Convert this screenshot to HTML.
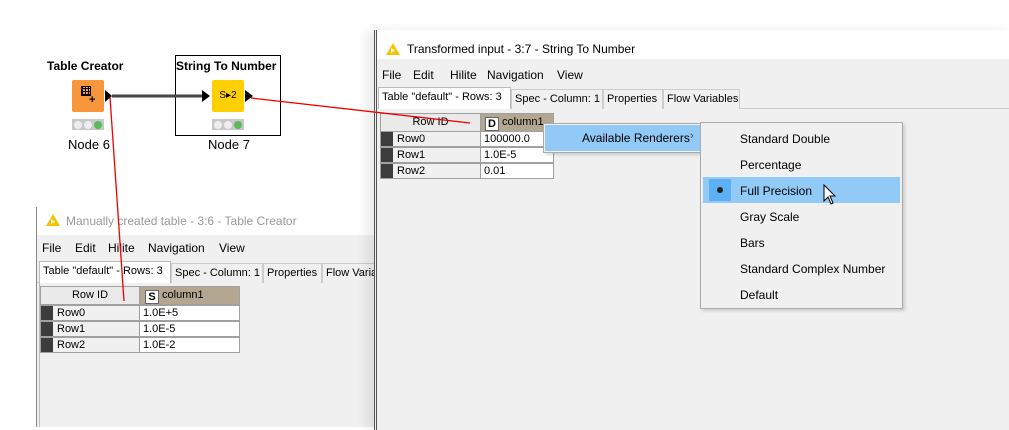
<!DOCTYPE html>
<html><head><meta charset="utf-8"><style>
*{margin:0;padding:0;box-sizing:border-box}
body{width:1009px;height:427px;overflow:hidden;background:#fff;position:relative;font-family:"Liberation Sans",sans-serif;font-size:12px;color:#000}
.a{position:absolute;white-space:nowrap}
.win{position:absolute;background:#f0f0f0;border-left:1px solid #888;}
.title{position:absolute;left:0;right:0;top:0;height:28px;background:#fff}
.menu{position:absolute;font-size:12px}
.tab{position:absolute;height:20px;border:1px solid #ccc;border-bottom:none;background:#f0f0f0;font-size:11px;padding:3px 3px 0;white-space:nowrap}
.tab.sel{background:#fff;height:22px;border-color:#bbb}
.cell{position:absolute;height:16px;border:1px solid #a0a0a0;background:#fff;font-size:11px;padding-left:3px;line-height:14px}
.rh{position:absolute;height:16px;border:1px solid #a0a0a0;background:#f0f0f0;font-size:11px;line-height:14px;padding-left:16px}
.rh:before{content:"";position:absolute;left:0;top:0;width:12px;height:14px;background:#3c3c3c}
.hd{position:absolute;height:19px;border:1px solid #a0a0a0;font-size:11px;line-height:17px}
.tri{position:absolute;width:0;height:0;border-left:14px solid transparent;border-right:0}
</style></head><body>

<!-- canvas nodes -->
<div class="a" style="left:47px;top:59px;font-weight:bold;font-size:12px">Table Creator</div>
<div class="a" style="left:72px;top:80px;width:32px;height:32px;background:#f7963a;border-radius:2px"></div>
<div class="a" style="left:81px;top:86px;width:10px;height:10px;border:1px solid #000;background:repeating-linear-gradient(90deg,#000 0 1px,transparent 1px 3px),repeating-linear-gradient(0deg,#000 0 1px,transparent 1px 3px)"></div>
<div class="a" style="left:89px;top:94px;font-weight:bold;font-size:11px">+</div>
<div class="a" style="left:72px;top:119px;width:32px;height:11px;background:#c8c8c8"></div>
<div class="a" style="left:74px;top:121px;width:8px;height:8px;border-radius:50%;background:#eee"></div>
<div class="a" style="left:84px;top:121px;width:8px;height:8px;border-radius:50%;background:#eee"></div>
<div class="a" style="left:94px;top:121px;width:8px;height:8px;border-radius:50%;background:#5cb85c"></div>
<div class="a" style="left:68px;top:137px;font-size:13px">Node 6</div>

<div class="a" style="left:175px;top:55px;width:106px;height:81px;border:1px solid #000"></div>
<div class="a" style="left:176px;top:59px;font-weight:bold;font-size:12px">String To Number</div>
<div class="a" style="left:212px;top:80px;width:32px;height:32px;background:#ffd000;border-radius:2px;font-size:10px;text-align:center;line-height:32px">S▸2</div>
<div class="a" style="left:212px;top:119px;width:32px;height:11px;background:#c8c8c8"></div>
<div class="a" style="left:214px;top:121px;width:8px;height:8px;border-radius:50%;background:#eee"></div>
<div class="a" style="left:224px;top:121px;width:8px;height:8px;border-radius:50%;background:#eee"></div>
<div class="a" style="left:234px;top:121px;width:8px;height:8px;border-radius:50%;background:#5cb85c"></div>
<div class="a" style="left:208px;top:137px;font-size:13px">Node 7</div>

<svg class="a" style="left:0;top:0" width="1009" height="427">
<line x1="112" y1="96" x2="202" y2="96" stroke="#444" stroke-width="3"/>
<polygon points="105,90 105,102 112,96" fill="#000"/>
<polygon points="202,90 202,102 210,96" fill="#000"/>
<polygon points="245,90 245,102 253,96" fill="#000"/>
</svg>

<!-- back window -->
<div class="win" style="left:36px;top:207px;width:345px;height:220px">
 <div class="title"></div>
 <svg class="a" style="left:8px;top:6px" width="16" height="14"><polygon points="8,1 15,13 1,13" fill="#f5c400"/><polygon points="6,6 6,11 10,8.5" fill="#fff"/></svg>
 <div class="a" style="left:29px;top:7px;font-size:12px;color:#999">Manually created table - 3:6 - Table Creator</div>
 <div class="menu a" style="left:5px;top:34px">File</div>
 <div class="menu a" style="left:38px;top:34px">Edit</div>
 <div class="menu a" style="left:71px;top:34px">Hilite</div>
 <div class="menu a" style="left:111px;top:34px">Navigation</div>
 <div class="menu a" style="left:182px;top:34px">View</div>
 <div class="a" style="left:0;right:0;top:75px;border-top:1px solid #ccc"></div>
 <div class="tab sel" style="left:2px;top:54px;width:132px">Table "default" - Rows: 3</div>
 <div class="tab" style="left:134px;top:56px;width:92px">Spec - Column: 1</div>
 <div class="tab" style="left:226px;top:56px;width:59px">Properties</div>
 <div class="tab" style="left:285px;top:56px;width:70px">Flow Variables</div>
 <div class="a" style="left:2px;top:76px;right:0;bottom:0;border-left:1px solid #bbb"></div>
 <div class="hd" style="left:3px;top:79px;width:100px;background:#eaeaea;text-align:center">Row ID</div>
 <div class="hd" style="left:102px;top:79px;width:101px;background:#b4a792;padding-left:5px"><span style="display:inline-block;width:14px;height:14px;background:#fff;border:1px solid #666;text-align:center;line-height:12px;font-weight:bold;vertical-align:-2px">S</span> column1</div>
 <div class="rh" style="left:3px;top:98px;width:100px">Row0</div><div class="cell" style="left:102px;top:98px;width:101px">1.0E+5</div>
 <div class="rh" style="left:3px;top:114px;width:100px">Row1</div><div class="cell" style="left:102px;top:114px;width:101px">1.0E-5</div>
 <div class="rh" style="left:3px;top:130px;width:100px">Row2</div><div class="cell" style="left:102px;top:130px;width:101px">1.0E-2</div>
</div>

<!-- front window -->
<div class="win" style="left:374px;top:30px;width:640px;height:400px;border-left:3px double #555;box-shadow:-8px 0 10px rgba(0,0,0,0.08)">
 <div class="title" style="height:29px"></div>
 <svg class="a" style="left:8px;top:12px" width="16" height="14"><polygon points="8,1 15,13 1,13" fill="#f5c400"/><polygon points="6,6 6,11 10,8.5" fill="#fff"/></svg>
 <div class="a" style="left:30px;top:12px;font-size:12px">Transformed input - 3:7 - String To Number</div>
 <div class="menu a" style="left:5px;top:38px">File</div>
 <div class="menu a" style="left:36px;top:38px">Edit</div>
 <div class="menu a" style="left:73px;top:38px">Hilite</div>
 <div class="menu a" style="left:110px;top:38px">Navigation</div>
 <div class="menu a" style="left:180px;top:38px">View</div>
 <div class="a" style="left:0;right:0;top:78px;border-top:1px solid #ccc"></div>
 <div class="tab sel" style="left:1px;top:57px;width:133px">Table "default" - Rows: 3</div>
 <div class="tab" style="left:134px;top:59px;width:92px">Spec - Column: 1</div>
 <div class="tab" style="left:226px;top:59px;width:60px">Properties</div>
 <div class="tab" style="left:286px;top:59px;width:77px">Flow Variables</div>
 <div class="hd" style="left:3px;top:83px;width:101px;background:#eaeaea;text-align:center;height:19px">Row ID</div>
 <div class="hd" style="left:103px;top:83px;width:74px;background:#b4a792;padding-left:4px"><span style="display:inline-block;width:14px;height:14px;background:#fff;border:1px solid #666;text-align:center;line-height:12px;font-weight:bold;vertical-align:-2px">D</span> column1</div>
 <div class="rh" style="left:3px;top:101px;width:101px">Row0</div><div class="cell" style="left:103px;top:101px;width:74px">100000.0</div>
 <div class="rh" style="left:3px;top:117px;width:101px">Row1</div><div class="cell" style="left:103px;top:117px;width:74px">1.0E-5</div>
 <div class="rh" style="left:3px;top:133px;width:101px">Row2</div><div class="cell" style="left:103px;top:133px;width:74px">0.01</div>
</div>

<!-- submenu -->
<div class="a" style="left:543px;top:123px;width:159px;height:30px;background:#f0f0f0;border:1px solid #aaa;box-shadow:2px 2px 3px rgba(0,0,0,.15)"></div>
<div class="a" style="left:545px;top:125px;width:155px;height:26px;background:#91c9f7"></div>
<div class="a" style="left:582px;top:131px;font-size:12px">Available Renderers</div>
<div class="a" style="left:690px;top:130px;font-size:11px;color:#444">›</div>

<div class="a" style="left:700px;top:122px;width:203px;height:187px;background:#f0f0f0;border:1px solid #aaa;box-shadow:2px 2px 3px rgba(0,0,0,.15)"></div>
<div class="a" style="left:703px;top:177px;width:197px;height:26px;background:#91c9f7"></div>
<div class="a" style="left:709px;top:179px;width:22px;height:22px;background:#5eb0f5"></div>
<div class="a" style="left:717px;top:187px;width:6px;height:6px;border-radius:50%;background:#222"></div>
<div class="a" style="left:740px;top:132px">Standard Double</div>
<div class="a" style="left:740px;top:158px">Percentage</div>
<div class="a" style="left:740px;top:184px">Full Precision</div>
<div class="a" style="left:740px;top:210px">Gray Scale</div>
<div class="a" style="left:740px;top:236px">Bars</div>
<div class="a" style="left:740px;top:262px">Standard Complex Number</div>
<div class="a" style="left:740px;top:288px">Default</div>
<svg class="a" style="left:823px;top:184px" width="14" height="22"><path d="M1,1 L1,17 L5,13 L8,20 L10,19 L7,12 L12,12 Z" fill="#fff" stroke="#000" stroke-width="1"/></svg>

<!-- red lines -->
<svg class="a" style="left:0;top:0" width="1009" height="427">
<line x1="251" y1="98" x2="470" y2="123" stroke="#e00" stroke-width="1.3"/>
<line x1="110" y1="97" x2="124" y2="301" stroke="#e00" stroke-width="1.3"/>
</svg>
</body></html>
